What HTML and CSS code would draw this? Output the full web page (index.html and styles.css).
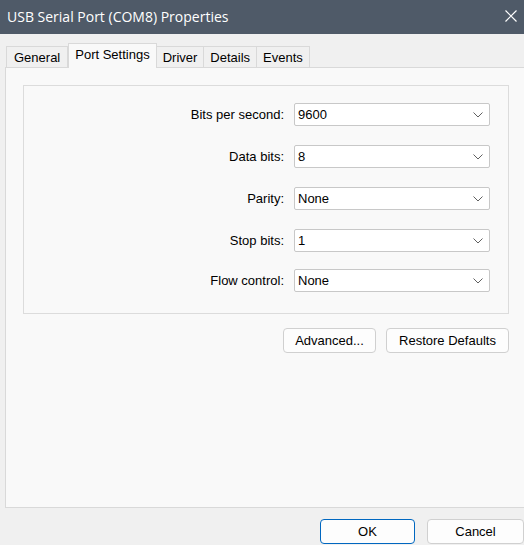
FILE: index.html
```html
<!DOCTYPE html>
<html lang="en">
  <head>
    <meta charset="UTF-8" />
    <meta name="viewport" content="width=device-width, initial-scale=1.0" />
    <title>USB Serial Port (COM8) Properties</title>
    <link rel="stylesheet" href="styles.css">
  </head>
  <body>
    <div class="window">
      <!-- 标题栏 -->
      <div class="titlebar">
        <span class="title">USB Serial Port (COM8) Properties</span>
        <svg class="close" width="12" height="12" viewBox="0 0 12 12">
          <path d="M0.5 0.5 L11.5 11.5 M11.5 0.5 L0.5 11.5" stroke="#ffffff" stroke-width="1.2" fill="none" />
        </svg>
      </div>

      <!-- 选项卡 -->
      <div class="tabs">
        <div class="tab">General</div>
        <div class="tab active">Port Settings</div>
        <div class="tab">Driver</div>
        <div class="tab">Details</div>
        <div class="tab">Events</div>
      </div>

      <div class="panel">
        <div class="groupbox">
          <div class="row">
            <span class="label">Bits per second:</span>
            <div class="combo"><span>9600</span><svg class="chev" width="10" height="6" viewBox="0 0 10 6"><path d="M0.5 0.5 L5 5 L9.5 0.5" stroke="#606060" fill="none" /></svg></div>
          </div>
          <div class="row">
            <span class="label">Data bits:</span>
            <div class="combo"><span>8</span><svg class="chev" width="10" height="6" viewBox="0 0 10 6"><path d="M0.5 0.5 L5 5 L9.5 0.5" stroke="#606060" fill="none" /></svg></div>
          </div>
          <div class="row">
            <span class="label">Parity:</span>
            <div class="combo"><span>None</span><svg class="chev" width="10" height="6" viewBox="0 0 10 6"><path d="M0.5 0.5 L5 5 L9.5 0.5" stroke="#606060" fill="none" /></svg></div>
          </div>
          <div class="row">
            <span class="label">Stop bits:</span>
            <div class="combo"><span>1</span><svg class="chev" width="10" height="6" viewBox="0 0 10 6"><path d="M0.5 0.5 L5 5 L9.5 0.5" stroke="#606060" fill="none" /></svg></div>
          </div>
          <div class="row">
            <span class="label">Flow control:</span>
            <div class="combo"><span>None</span><svg class="chev" width="10" height="6" viewBox="0 0 10 6"><path d="M0.5 0.5 L5 5 L9.5 0.5" stroke="#606060" fill="none" /></svg></div>
          </div>
        </div>

        <div class="panel-buttons">
          <button class="btn btn-adv">Advanced...</button>
          <button class="btn btn-restore">Restore Defaults</button>
        </div>
      </div>

      <!-- 底部按钮 -->
      <div class="footer">
        <button class="btn btn-ok">OK</button>
        <button class="btn btn-cancel">Cancel</button>
      </div>
    </div>
  </body>
</html>
```

FILE: styles.css
```css
/* 窗口 */
body {
  margin: 0;
  padding: 0;
  background-color: #f0f0f0;
  font-family: "Liberation Sans", Arial, sans-serif;
  font-size: 13px;
  color: #000;
}

.window {
  width: 524px;
  height: 545px;
  overflow: hidden;
}

/* 标题栏 */
.titlebar {
  height: 34px;
  background-color: #4f5a68;
  display: flex;
  align-items: center;
  justify-content: space-between;
  padding: 0 6px 0 7px;
}

.title {
  color: #ffffff;
  font-family: "Open Sans", "Noto Sans", sans-serif;
  font-size: 14px;
  margin-top: -1px;
}

.close {
  margin-right: 1px;
  margin-top: -2px;
}

/* 选项卡 */
.tabs {
  display: flex;
  align-items: flex-end;
  padding-left: 6px;
  margin-top: 9px;
  height: 24px;
}

.tab {
  height: 20px;
  line-height: 21px;
  padding: 0 6px;
  border: 1px solid #d9d9d9;
  border-bottom: none;
  border-left: none;
  background-color: #f0f0f0;
}

.tab:first-child {
  border-left: 1px solid #d9d9d9;
  padding: 0 7px;
}

.tab.active {
  height: 24px;
  line-height: 21px;
  padding: 0 6px;
  border-left: 1px solid #d9d9d9;
  background-color: #f9f9f9;
  margin-bottom: -1px;
  position: relative;
  z-index: 1;
}

/* 面板 */
.panel {
  margin-left: 5px;
  height: 441px;
  border: 1px solid #d9d9d9;
  border-right: none;
  background-color: #f9f9f9;
  padding: 17px 0 0 17px;
  box-sizing: border-box;
}

.groupbox {
  width: 486px;
  height: 229px;
  box-sizing: border-box;
  border: 1px solid #dcdcdc;
  padding: 17px 18px 0 0;
  display: flex;
  flex-direction: column;
  gap: 19px;
}

.row {
  display: flex;
  align-items: center;
  justify-content: flex-end;
  gap: 10px;
}

.row:last-child {
  margin-top: -2px;
}

.combo {
  width: 196px;
  height: 23px;
  box-sizing: border-box;
  border: 1px solid #c8c8c8;
  border-radius: 2px;
  background-color: #ffffff;
  display: flex;
  align-items: center;
  justify-content: space-between;
  padding: 0 6px 0 3px;
}

.chev {
  margin-top: 1px;
}

/* 按钮 */
.btn {
  font-family: "Liberation Sans", Arial, sans-serif;
  font-size: 13px;
  height: 25px;
  background-color: #fdfdfd;
  border: 1px solid #d0d0d0;
  border-radius: 4px;
  color: #000;
  padding: 0;
}

.panel-buttons {
  display: flex;
  gap: 10px;
  margin-top: 14px;
  padding-left: 260px;
}

.btn-adv {
  width: 93px;
}

.btn-restore {
  width: 123px;
}

.footer {
  display: flex;
  gap: 12px;
  padding: 11px 0 0 320px;
}

.btn-ok {
  width: 97px;
  border-color: #0067c0;
}

.btn-cancel {
  width: 97px;
  flex-shrink: 0;
}
```
